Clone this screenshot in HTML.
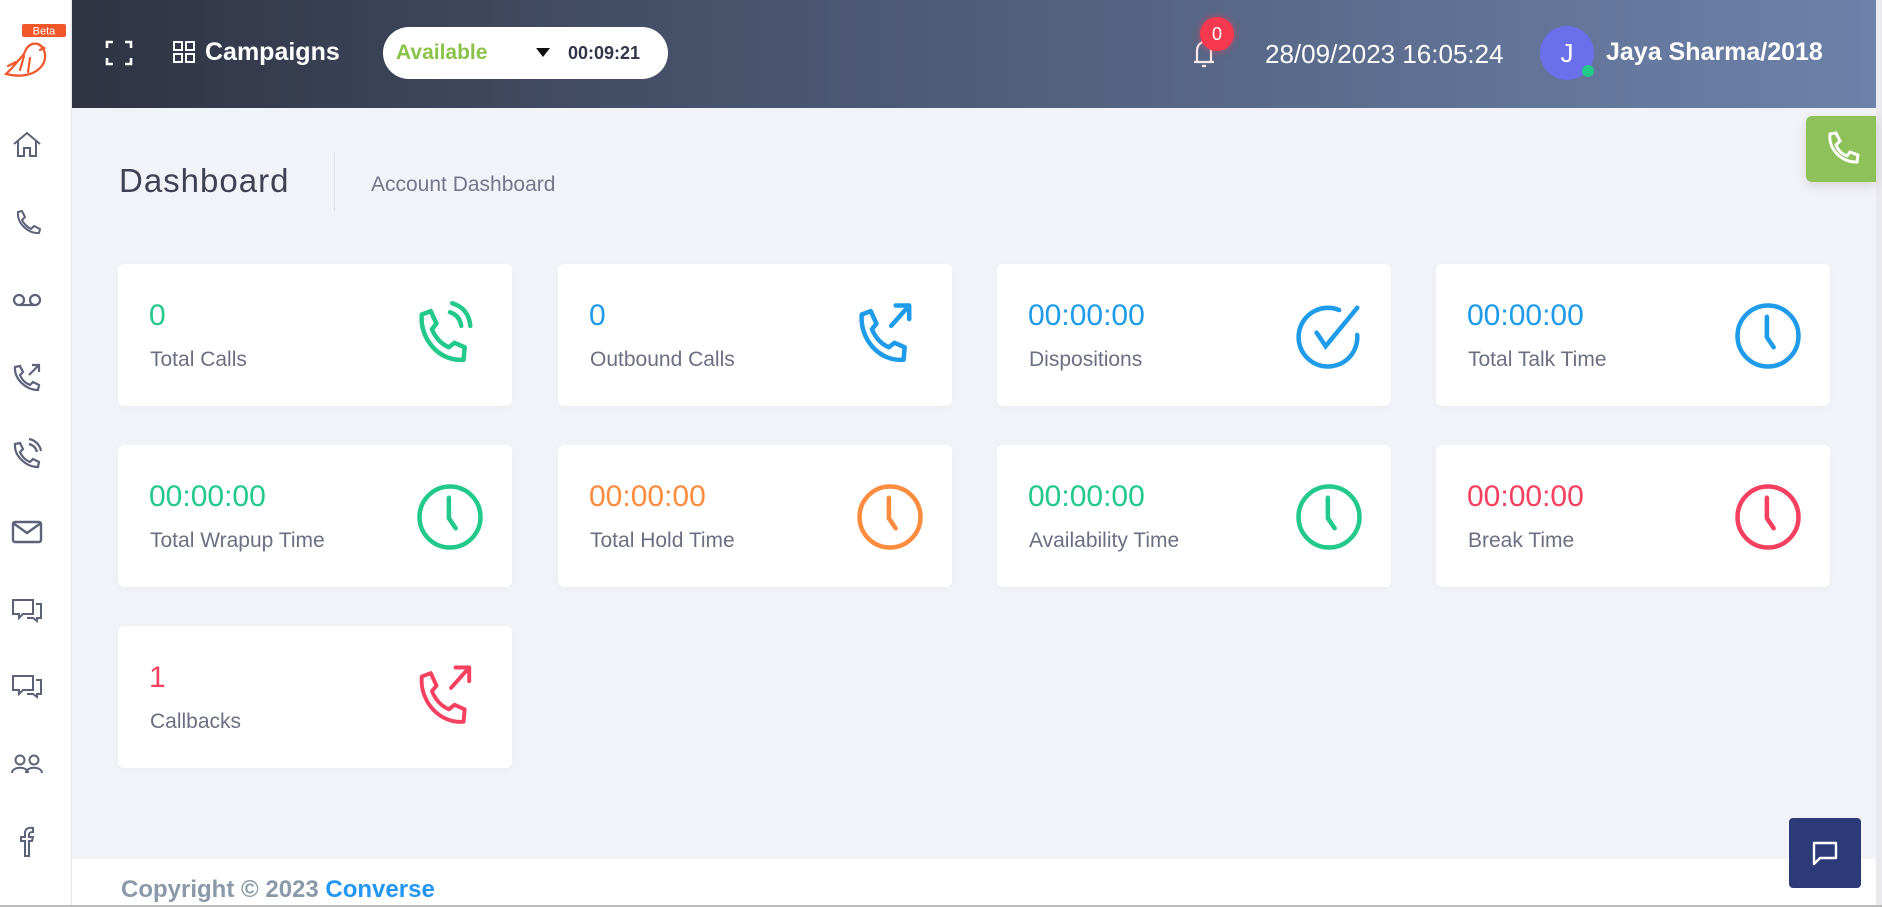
<!DOCTYPE html>
<html><head><meta charset="utf-8"><style>
*{margin:0;padding:0;box-sizing:border-box}
body{width:1882px;height:907px;overflow:hidden;background:#f2f3f8;font-family:"Liberation Sans",sans-serif;position:relative}
.side{position:absolute;left:0;top:0;width:72px;height:907px;background:#fff;border-right:1px solid #e4e5ea}
.hdr{position:absolute;left:72px;top:0;width:1804px;height:108px;background:linear-gradient(90deg,#2f3342 0%,#4a5670 40%,#6d82aa 100%)}
.sb{position:absolute;right:0;top:0;width:6px;height:907px;background:#e9e9ee}
.ico{position:absolute;left:9px;width:36px;height:36px}
.card{position:absolute;width:394px;height:142px;background:#fff;border-radius:6px;box-shadow:0 2px 10px rgba(0,0,0,.03)}
.num{position:absolute;left:31px;top:35px;font-size:30px;font-weight:normal}
.lbl{position:absolute;left:32px;top:84px;font-size:21px;color:#6b6f82}
.card svg{position:absolute;left:297px;top:37px;width:70px;height:70px}
</style></head><body>
<div class="side">
 <svg style="position:absolute;left:0;top:18px" width="72" height="65" viewBox="0 0 72 65">
  <rect x="22" y="6" width="44" height="13" fill="#f2572b" rx="2"/>
  <text x="44" y="16.5" font-size="11" fill="#fff" text-anchor="middle" font-family="Liberation Sans">Beta</text>
  <g fill="none" stroke="#f2572b" stroke-width="2.2" stroke-linecap="round">
   <path d="M6 56 C14 58 30 60 40 50 C48 42 46 30 38 26 C30 24 26 30 24 36 L12 50 Z"/>
   <path d="M38 26 L44 30 L40 32"/><path d="M24 38 L20 52"/><path d="M30 40 L28 54"/><path d="M8 48 L16 44"/>
  </g>
 </svg>
 <svg class="ico" style="top:127px" viewBox="0 0 36 36" fill="none" stroke="#5c6278" stroke-width="2"><path d="M5 17 L18 6 L31 17 M9 14 V29 H15 V21 H21 V29 H27 V14"/></svg>
 <svg class="ico" style="top:204px" viewBox="0 0 36 36" fill="none" stroke="#5c6278" stroke-width="2"><path d="M9 8 L13 7 L16 13 L13 16 C15 20 18 23 22 25 L25 22 L31 25 L30 29 C20 30 8 20 9 8 Z"/></svg>
 <svg class="ico" style="top:282px" viewBox="0 0 36 36" fill="none" stroke="#5c6278" stroke-width="2.2"><circle cx="10" cy="18" r="5"/><circle cx="26" cy="18" r="5"/><path d="M10 23 H26"/></svg>
 <svg class="ico" style="top:359px" viewBox="0 0 36 36" fill="none" stroke="#5c6278" stroke-width="2.2"><path d="M6 8 L11 7 L14 13 L11 16 C13 21 16 24 21 26 L24 23 L30 26 L29 31 C17 31 5 20 6 8 Z M20 16 L30 6 M23 6 H30 V13"/></svg>
 <svg class="ico" style="top:436px" viewBox="0 0 36 36" fill="none" stroke="#5c6278" stroke-width="2.2"><path d="M6 8 L11 7 L14 13 L11 16 C13 21 16 24 21 26 L24 23 L30 26 L29 31 C17 31 5 20 6 8 Z M20 8 C24 9 27 12 28 16 M20 3 C26 4 31 9 32 15"/></svg>
 <svg class="ico" style="top:514px" viewBox="0 0 36 36" fill="none" stroke="#5c6278" stroke-width="2.4"><rect x="4" y="8" width="28" height="20" rx="2"/><path d="M4 9 L18 19 L32 9"/></svg>
 <svg class="ico" style="top:592px" viewBox="0 0 36 36" fill="none" stroke="#5c6278" stroke-width="2"><path d="M4 8 H24 V22 H14 L10 26 V22 H4 Z M27 12 H32 V26 H28 V29 L24 26 H18"/></svg>
 <svg class="ico" style="top:668px" viewBox="0 0 36 36" fill="none" stroke="#5c6278" stroke-width="2"><path d="M4 8 H24 V22 H14 L10 26 V22 H4 Z M27 12 H32 V26 H28 V29 L24 26 H18"/></svg>
 <svg class="ico" style="top:746px" viewBox="0 0 36 36" fill="none" stroke="#5c6278" stroke-width="2"><circle cx="11" cy="14" r="4.5"/><circle cx="25" cy="14" r="4.5"/><path d="M3 27 C3 20 19 20 19 27 M17 27 C17 20 33 20 33 27"/></svg>
 <svg class="ico" style="top:824px" viewBox="0 0 36 36" fill="none" stroke="#5c6278" stroke-width="2"><path d="M16 32 V17 H12 V13 H16 V9 C16 5 19 3 24 4 V8 C21 8 20 9 20 11 V13 H24 L23 17 H20 V32 Z"/></svg>
</div>
<div class="hdr">
 <svg style="position:absolute;left:32px;top:38px" width="30" height="30" viewBox="0 0 30 30" fill="none" stroke="#fff" stroke-width="2.6"><path d="M3 10 V4 H9 M21 4 H27 V10 M27 20 V26 H21 M9 26 H3 V20"/></svg>
 <svg style="position:absolute;left:100px;top:40px" width="25" height="25" viewBox="0 0 25 25" fill="none" stroke="#fff" stroke-width="2"><rect x="2" y="2" width="8" height="8"/><rect x="14" y="2" width="8" height="8"/><rect x="2" y="14" width="8" height="8"/><rect x="14" y="14" width="8" height="8"/></svg>
 <div style="position:absolute;left:133px;top:38px;color:#fff;font-size:25px;font-weight:bold">Campaigns</div>
 <div style="position:absolute;left:311px;top:27px;width:285px;height:52px;background:#fff;border-radius:26px">
  <div style="position:absolute;left:13px;top:14px;color:#8bc34a;font-size:21px;font-weight:bold">Available</div>
  <div style="position:absolute;left:153px;top:21px;width:0;height:0;border-left:7px solid transparent;border-right:7px solid transparent;border-top:9px solid #111"></div>
  <div style="position:absolute;left:185px;top:16px;color:#303548;font-size:18px;font-weight:bold">00:09:21</div>
 </div>
 <svg style="position:absolute;left:1117px;top:36px" width="30" height="34" viewBox="0 0 30 34" fill="none" stroke="#fbe8ea" stroke-width="2.2"><path d="M5 26 H25 M8 26 V15 C8 9 12 6 15 6 C18 6 22 9 22 15 V26 M13 30 H17"/></svg>
 <div style="position:absolute;left:1128px;top:17px;width:34px;height:34px;border-radius:50%;background:#f7394f;box-shadow:0 0 8px rgba(255,60,80,.6);color:#fff;font-size:18px;text-align:center;line-height:34px">0</div>
 <div style="position:absolute;left:1193px;top:39px;color:#fff;font-size:26px">28/09/2023 16:05:24</div>
 <div style="position:absolute;left:1468px;top:26px;width:54px;height:54px;border-radius:50%;background:#6970e9;color:#fff;font-size:26px;text-align:center;line-height:54px">J</div>
 <div style="position:absolute;left:1510px;top:65px;width:12px;height:12px;border-radius:50%;background:#22c98b"></div>
 <div style="position:absolute;left:1534px;top:38px;color:#fff;font-size:25px;font-weight:bold">Jaya Sharma/2018</div>
</div>
<div class="sb"></div>
<div style="position:absolute;left:1806px;top:116px;width:70px;height:66px;background:#8fc15a;border-radius:6px 0 0 6px;box-shadow:0 4px 12px rgba(0,0,0,.12)">
 <svg style="position:absolute;left:16px;top:13px" width="40" height="40" viewBox="0 0 40 40" fill="none" stroke="#fff" stroke-width="3"><path d="M8 5 L14 4 L18 12 L14 16 C16 21 19 25 25 27 L28 23 L36 26 L35 33 C20 34 6 20 8 5 Z"/></svg>
</div>
<div style="position:absolute;left:119px;top:162px;font-size:33px;color:#3f4254;letter-spacing:1px">Dashboard</div>
<div style="position:absolute;left:334px;top:152px;width:1px;height:59px;background:#e0e1e6"></div>
<div style="position:absolute;left:371px;top:173px;font-size:21px;color:#73778a">Account Dashboard</div>

<div class="card" style="left:118px;top:264px"><div class="num" style="color:#22c98b">0</div><div class="lbl">Total Calls</div>
<svg viewBox="0 0 62 62" fill="none" stroke="#22c98b" stroke-width="4" stroke-linecap="round" stroke-linejoin="round"><path d="M6 12 L14 9 L19 20 L15 25 C18 32 23 38 30 41 L35 37 L44 41 L43 52 C22 54 4 34 6 12 Z M31 10 C37 12 40 16 41 22 M33 2 C43 5 48 12 49 22"/></svg></div>
<div class="card" style="left:558px;top:264px"><div class="num" style="color:#1e9be9">0</div><div class="lbl">Outbound Calls</div>
<svg viewBox="0 0 62 62" fill="none" stroke="#1e9be9" stroke-width="4" stroke-linecap="round" stroke-linejoin="round"><path d="M6 12 L14 9 L19 20 L15 25 C18 32 23 38 30 41 L35 37 L44 41 L43 52 C22 54 4 34 6 12 Z M32 22 L48 4 M36 4 H48 V16"/></svg></div>
<div class="card" style="left:997px;top:264px"><div class="num" style="color:#1e9be9">00:00:00</div><div class="lbl">Dispositions</div>
<svg viewBox="0 0 62 62" fill="none" stroke="#1e9be9" stroke-width="4" stroke-linecap="round"><path d="M40 8 A26 26 0 1 0 56 30 M20 28 L28 40 L56 6"/></svg></div>
<div class="card" style="left:1436px;top:264px"><div class="num" style="color:#1e9be9">00:00:00</div><div class="lbl">Total Talk Time</div>
<svg viewBox="0 0 62 62" fill="none" stroke="#1e9be9" stroke-width="4" stroke-linecap="round"><circle cx="31" cy="31" r="27"/><path d="M30 14 V32 L36 41"/></svg></div>

<div class="card" style="left:118px;top:445px"><div class="num" style="color:#22c98b">00:00:00</div><div class="lbl">Total Wrapup Time</div>
<svg viewBox="0 0 62 62" fill="none" stroke="#22c98b" stroke-width="4" stroke-linecap="round"><circle cx="31" cy="31" r="27"/><path d="M30 14 V32 L36 41"/></svg></div>
<div class="card" style="left:558px;top:445px"><div class="num" style="color:#fd8c3f">00:00:00</div><div class="lbl">Total Hold Time</div>
<svg viewBox="0 0 62 62" fill="none" stroke="#fd8c3f" stroke-width="4" stroke-linecap="round"><circle cx="31" cy="31" r="27"/><path d="M30 14 V32 L36 41"/></svg></div>
<div class="card" style="left:997px;top:445px"><div class="num" style="color:#22c98b">00:00:00</div><div class="lbl">Availability Time</div>
<svg viewBox="0 0 62 62" fill="none" stroke="#22c98b" stroke-width="4" stroke-linecap="round"><circle cx="31" cy="31" r="27"/><path d="M30 14 V32 L36 41"/></svg></div>
<div class="card" style="left:1436px;top:445px"><div class="num" style="color:#f5415f">00:00:00</div><div class="lbl">Break Time</div>
<svg viewBox="0 0 62 62" fill="none" stroke="#f5415f" stroke-width="4" stroke-linecap="round"><circle cx="31" cy="31" r="27"/><path d="M30 14 V32 L36 41"/></svg></div>

<div class="card" style="left:118px;top:626px"><div class="num" style="color:#f5415f">1</div><div class="lbl">Callbacks</div>
<svg viewBox="0 0 62 62" fill="none" stroke="#f5415f" stroke-width="3.5" stroke-linecap="round" stroke-linejoin="round"><path d="M6 12 L14 9 L19 20 L15 25 C18 32 23 38 30 41 L35 37 L44 41 L43 52 C22 54 4 34 6 12 Z M32 22 L48 4 M36 4 H48 V16"/></svg></div>

<div style="position:absolute;left:72px;top:859px;width:1804px;height:48px;background:#fff"></div>
<div style="position:absolute;left:121px;top:876px;font-size:24px;font-weight:bold;color:#8b9aa8">Copyright © 2023 <span style="color:#2196f3">Converse</span></div>
<div style="position:absolute;left:0;top:905px;width:1882px;height:2px;background:#bbb"></div>
<div style="position:absolute;left:1789px;top:818px;width:72px;height:70px;background:#2c3a78;border-radius:4px">
 <svg style="position:absolute;left:22px;top:21px" width="28" height="28" viewBox="0 0 28 28" fill="none" stroke="#fff" stroke-width="2.4" stroke-linejoin="round"><path d="M3 4 H25 V19 H9 L3 25 Z"/></svg>
</div>
</body></html>
